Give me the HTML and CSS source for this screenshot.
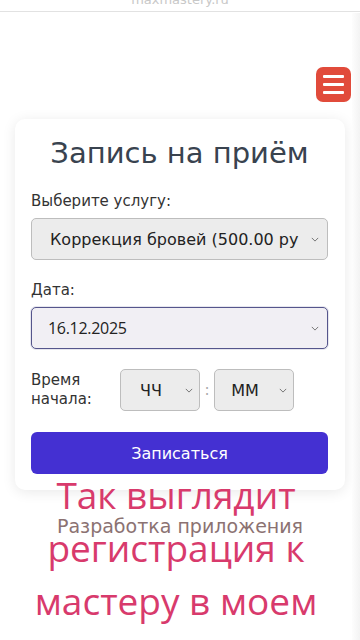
FILE: index.html
```html
<!DOCTYPE html>
<html lang="ru">
<head>
<meta charset="utf-8">
<link rel="stylesheet" href="styles.css">
</head>
<body>
<div class="page">
  <div class="topbar"><span class="topbar-text">maxmastery.ru</span></div>
  <div class="menu-row">
    <button class="burger" aria-label="Меню">
      <span></span><span></span><span></span>
    </button>
  </div>
  <div class="card">
    <h1 class="title">Запись на приём</h1>
    <div class="field">
      <label class="label">Выберите услугу:</label>
      <div class="select"><span class="select-text">Коррекция бровей (500.00 ру</span><svg class="chev" viewBox="0 0 10 6"><path d="M1 1l4 4 4-4" fill="none" stroke="#666" stroke-width="1.1"/></svg></div>
    </div>
    <div class="field">
      <label class="label">Дата:</label>
      <div class="select focused"><span class="select-text date">16.12.2025</span><svg class="chev" viewBox="0 0 10 6"><path d="M1 1l4 4 4-4" fill="none" stroke="#666" stroke-width="1.1"/></svg></div>
    </div>
    <div class="time-row">
      <div class="time-label">Время<br>начала:</div>
      <div class="select small"><span class="select-text center">ЧЧ</span><svg class="chev" viewBox="0 0 10 6"><path d="M1 1l4 4 4-4" fill="none" stroke="#666" stroke-width="1.1"/></svg></div>
      <span class="colon">:</span>
      <div class="select small"><span class="select-text center">ММ</span><svg class="chev" viewBox="0 0 10 6"><path d="M1 1l4 4 4-4" fill="none" stroke="#666" stroke-width="1.1"/></svg></div>
    </div>
    <button class="submit">Записаться</button>
  </div>
  <div class="scroll-strip"></div>
</div>
<div class="caption">
  <div class="cap-line">Так выглядит</div>
  <div class="cap-line">регистрация к</div>
  <div class="cap-line">мастеру в моем</div>
  <div class="watermark">Разработка приложения</div>
</div>
</body>
</html>
```
FILE: styles.css
```css
* { box-sizing: border-box; }
html, body { margin: 0; padding: 0; }
body {
  width: 360px;
  height: 640px;
  overflow: hidden;
  background: #fff;
  font-family: "DejaVu Sans", "Noto Sans", sans-serif;
  position: relative;
}
.page { position: relative; height: 640px; }
.topbar {
  height: 12px;
  border-bottom: 1px solid #e2e2e2;
  overflow: hidden;
  display: flex;
  justify-content: center;
}
.topbar-text {
  font-size: 13px;
  color: #c8c8c8;
  line-height: 13px;
  margin-top: -7px;
}
.menu-row {
  display: flex;
  justify-content: flex-end;
  padding: 55px 9px 0 0;
}
.burger {
  width: 35px;
  height: 35px;
  border: none;
  border-radius: 7px;
  background: #e14b3b;
  display: flex;
  flex-direction: column;
  justify-content: center;
  align-items: center;
  gap: 5px;
  padding: 0;
}
.burger span {
  display: block;
  width: 21px;
  height: 3px;
  background: #fff;
  border-radius: 1px;
}
.card {
  margin: 17px 15px 0 15px;
  width: 330px;
  background: #fff;
  border-radius: 10px;
  box-shadow: 0 2px 14px rgba(0,0,0,0.09);
  padding: 14px 17px 16px 16px;
}
.title {
  margin: 0 0 18px 0;
  text-align: center;
  font-weight: 400;
  font-size: 29px;
  line-height: 40px;
  color: #39434f;
}
.field { margin-bottom: 20px; }
.label {
  display: block;
  font-size: 15px;
  line-height: 20px;
  color: #333;
  margin-bottom: 7px;
}
.select {
  height: 42px;
  border: 1px solid #bdbdbd;
  border-radius: 5px;
  background: #ececec;
  display: flex;
  align-items: center;
  padding: 0 8px 0 18px;
}
.select.focused {
  background: #f1eff4;
  border: 1px solid #55558c;
  box-shadow: 0 0 0 1px rgba(85,85,140,0.15);
  padding-left: 16px;
}
.select-text {
  flex: 1;
  font-size: 16px;
  color: #222;
  white-space: nowrap;
  overflow: hidden;
}
.select-text.date {
  font-family: "Open Sans", sans-serif;
  letter-spacing: -0.3px;
}
.select-text.center { text-align: center; }
.chev { width: 8px; height: 5px; flex: none; }
.time-row {
  display: flex;
  align-items: center;
  margin-top: 18px;
  margin-bottom: 21px;
}
.time-label {
  width: 89px;
  font-size: 15px;
  line-height: 19px;
  color: #333;
}
.select.small {
  width: 80px;
  padding: 0 6px 0 0;
}
.select.small .chev { margin-left: 4px; }
.colon {
  width: 14px;
  text-align: center;
  color: #aaa;
  font-size: 15px;
}
.submit {
  display: block;
  width: 100%;
  height: 42px;
  border: none;
  border-radius: 6px;
  background: #4430d2;
  color: #fff;
  font-family: inherit;
  font-size: 16px;
}
.scroll-strip {
  position: absolute;
  top: 13px;
  right: 0;
  width: 8px;
  height: 627px;
  background: linear-gradient(to right, #fdfdfd, #f3f3f3);
}
.caption {
  position: absolute;
  left: 0;
  top: 468px;
  width: 360px;
  text-align: center;
  font-family: "Open Sans", "Noto Sans", sans-serif;
  color: #d83a6c;
}
.cap-line {
  font-size: 37px;
  line-height: 53px;
  margin-left: -8px;
}
.watermark {
  position: absolute;
  top: 46px;
  left: 0;
  width: 360px;
  text-align: center;
  font-family: "DejaVu Sans", sans-serif;
  font-size: 19px;
  line-height: 24px;
  color: #8b7272;
}
```
